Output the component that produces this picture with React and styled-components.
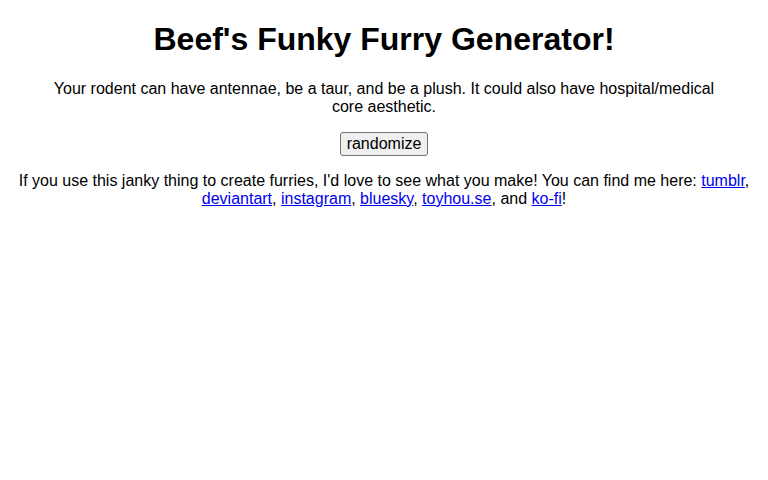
import React from "react";
import styled, { createGlobalStyle } from "styled-components";

const Global = createGlobalStyle`
  html, body { background: #fff; }
  body {
    margin: 0 8px;
    font-family: "Liberation Sans", Arial, sans-serif;
    font-size: 16px;
    color: #000;
  }
`;

const Page = styled.main`
  text-align: center;
`;

const Title = styled.h1`
  font-size: 32px;
  font-weight: bold;
  margin: 21.44px 0;
  line-height: normal;
`;

const Blurb = styled.p`
  max-width: 680px;
  margin: 16px auto;
  line-height: normal;
`;

const Controls = styled.div`
  display: flex;
  justify-content: center;
`;

const Button = styled.button`
  font-family: "Liberation Sans", Arial, sans-serif;
  font-size: 16px;
  line-height: normal;
  color: #000;
  background: #efefef;
  border: 1px solid #767676;
  border-radius: 3px;
  padding: 2px 6px;
  cursor: pointer;
`;

const Credits = styled.p`
  margin: 16px 0;
  line-height: normal;
`;

const Link = styled.a`
  color: #0000ee;
  text-decoration: underline;
`;

const links = [
  ["tumblr", "#"],
  ["deviantart", "#"],
  ["instagram", "#"],
  ["bluesky", "#"],
  ["toyhou.se", "#"],
];

export default function App() {
  return (
    <Page>
      <Global />
      <Title>Beef's Funky Furry Generator!</Title>
      <Blurb>
        Your rodent can have antennae, be a taur, and be a plush. It could also
        have hospital/medical core aesthetic.
      </Blurb>
      <Controls>
        <Button type="button">randomize</Button>
      </Controls>
      <Credits>
        If you use this janky thing to create furries, I'd love to see what you
        make! You can find me here:{" "}
        {links.map(([name, href]) => (
          <React.Fragment key={name}>
            <Link href={href}>{name}</Link>,{" "}
          </React.Fragment>
        ))}
        and <Link href="#">ko-fi</Link>!
      </Credits>
    </Page>
  );
}
